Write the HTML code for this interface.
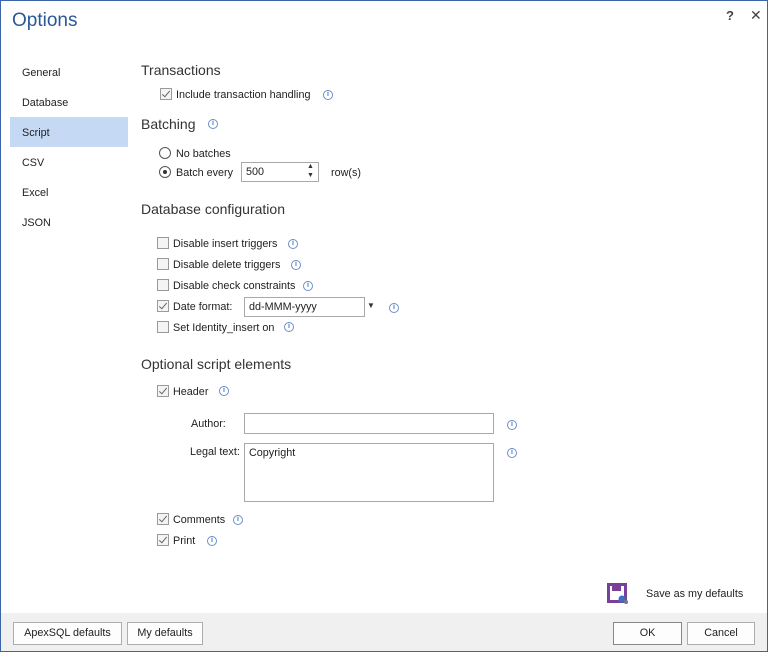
<!DOCTYPE html>
<html><head><style>
*{margin:0;padding:0;box-sizing:border-box}
body{width:768px;height:652px;overflow:hidden;background:#fff;font-family:"Liberation Sans",sans-serif;color:#222;position:relative}
.frame{position:absolute;left:0;top:0;width:768px;height:652px;border:1px solid #3c64a8}
.a{position:absolute;white-space:nowrap}
.s{font-size:10.8px}
.h{font-size:14px;color:#333}
.nav{font-size:10.8px;left:22px}
.cb{position:absolute;width:12px;height:12px;border:1px solid #9a9a9a;background:#f4f4f4}
.cb.c::after{content:"";position:absolute;left:3px;top:0px;width:3px;height:7px;border:solid #666;border-width:0 1.5px 1.5px 0;transform:rotate(40deg)}
.i{position:absolute;width:10px;height:10px;border:1px solid #6c8fcf;border-radius:50%;font-size:7px;color:#4a74c4;text-align:center;line-height:8px;font-weight:bold}
.rd{position:absolute;width:12px;height:12px;border:1px solid #555;border-radius:50%;background:#fff}
.in{position:absolute;border:1px solid #a9a9a9;background:#fff;font-size:10.8px;padding:3px 4px}
.btn{position:absolute;height:23px;border:1px solid #adadad;background:#fdfdfd;font-size:10.8px;text-align:center;line-height:21px}
</style></head><body>
<div class="frame"></div>
<div class="a" style="left:12px;top:10px;font-size:19px;color:#2b579a">Options</div>
<div class="a" style="left:726px;top:8px;font-size:13px;font-weight:bold;color:#444">?</div>
<div class="a" style="left:750px;top:7px;font-size:14px;color:#444">✕</div>

<div class="a nav" style="top:67px">General</div>
<div class="a nav" style="top:97px">Database</div>
<div class="a" style="left:10px;top:117px;width:118px;height:30px;background:#c5d9f5"></div>
<div class="a nav" style="top:127px">Script</div>
<div class="a nav" style="top:157px">CSV</div>
<div class="a nav" style="top:187px">Excel</div>
<div class="a nav" style="top:217px">JSON</div>

<div class="a h" style="left:141px;top:62px">Transactions</div>
<div class="cb c" style="left:160px;top:88px"></div>
<div class="a s" style="left:176px;top:89px">Include transaction handling</div>
<div class="i" style="left:323px;top:90px">i</div>

<div class="a h" style="left:141px;top:116px">Batching</div>
<div class="i" style="left:208px;top:119px">i</div>
<div class="rd" style="left:159px;top:147px"></div>
<div class="a s" style="left:176px;top:148px">No batches</div>
<div class="rd" style="left:159px;top:166px"></div>
<div class="a" style="left:163px;top:170px;width:4px;height:4px;border-radius:50%;background:#333"></div>
<div class="a s" style="left:176px;top:167px">Batch every</div>
<div class="in" style="left:241px;top:162px;width:78px;height:20px">500</div>
<div class="a" style="left:307px;top:163px;font-size:7px;color:#333">▲</div>
<div class="a" style="left:307px;top:172px;font-size:7px;color:#333">▼</div>
<div class="a s" style="left:331px;top:167px">row(s)</div>

<div class="a h" style="left:141px;top:201px">Database configuration</div>
<div class="cb" style="left:157px;top:237px"></div>
<div class="a s" style="left:173px;top:238px">Disable insert triggers</div>
<div class="i" style="left:288px;top:239px">i</div>
<div class="cb" style="left:157px;top:258px"></div>
<div class="a s" style="left:173px;top:259px">Disable delete triggers</div>
<div class="i" style="left:291px;top:260px">i</div>
<div class="cb" style="left:157px;top:279px"></div>
<div class="a s" style="left:173px;top:280px">Disable check constraints</div>
<div class="i" style="left:303px;top:281px">i</div>
<div class="cb c" style="left:157px;top:300px"></div>
<div class="a s" style="left:173px;top:301px">Date format:</div>
<div class="in" style="left:244px;top:297px;width:121px;height:20px">dd-MMM-yyyy</div>
<div class="a" style="left:367px;top:301px;font-size:8px;color:#333">▼</div>
<div class="i" style="left:389px;top:303px">i</div>
<div class="cb" style="left:157px;top:321px"></div>
<div class="a s" style="left:173px;top:322px">Set Identity_insert on</div>
<div class="i" style="left:284px;top:322px">i</div>

<div class="a h" style="left:141px;top:356px">Optional script elements</div>
<div class="cb c" style="left:157px;top:385px"></div>
<div class="a s" style="left:173px;top:386px">Header</div>
<div class="i" style="left:219px;top:386px">i</div>
<div class="a s" style="left:191px;top:418px">Author:</div>
<div class="in" style="left:244px;top:413px;width:250px;height:21px"></div>
<div class="i" style="left:507px;top:420px">i</div>
<div class="a s" style="left:190px;top:446px">Legal text:</div>
<div class="in" style="left:244px;top:443px;width:250px;height:59px">Copyright</div>
<div class="i" style="left:507px;top:448px">i</div>
<div class="cb c" style="left:157px;top:513px"></div>
<div class="a s" style="left:173px;top:514px">Comments</div>
<div class="i" style="left:233px;top:515px">i</div>
<div class="cb c" style="left:157px;top:534px"></div>
<div class="a s" style="left:173px;top:535px">Print</div>
<div class="i" style="left:207px;top:536px">i</div>

<svg class="a" style="left:607px;top:583px" width="22" height="22" viewBox="0 0 22 22">
<path d="M1.5 1.5H18.5V18.5H1.5Z" fill="none" stroke="#7a3f98" stroke-width="3"/><rect x="5" y="2" width="9" height="6" fill="#7a3f98"/>
<circle cx="15" cy="16" r="3.5" fill="#3c6fc0"/><circle cx="19" cy="19" r="2" fill="#777"/></svg>
<div class="a s" style="left:646px;top:588px">Save as my defaults</div>

<div class="a" style="left:1px;top:613px;width:766px;height:38px;background:#f0f0f0"></div>
<div class="btn" style="left:13px;top:622px;width:109px">ApexSQL defaults</div>
<div class="btn" style="left:127px;top:622px;width:76px">My defaults</div>
<div class="btn" style="left:613px;top:622px;width:69px;border-color:#888">OK</div>
<div class="btn" style="left:687px;top:622px;width:68px">Cancel</div>
</body></html>
